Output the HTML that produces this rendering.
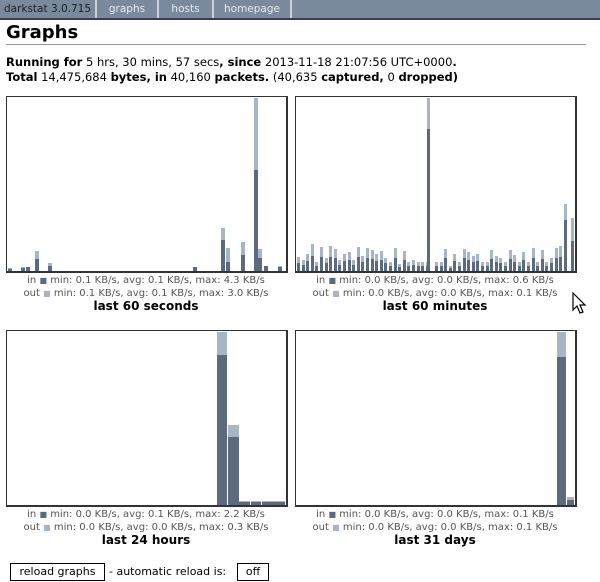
<!DOCTYPE html>
<html><head><meta charset="utf-8"><style>
*{margin:0;padding:0}
body{width:600px;height:582px;background:#fff;font-family:"DejaVu Sans","Liberation Sans",sans-serif;position:relative;overflow:hidden;color:#000}
.nav{position:absolute;left:0;top:0;width:600px;height:18px;background:#788a9c;border-bottom:2px solid #3a4048}
.tab{position:absolute;top:0;height:18px;font-size:10.5px;line-height:18px;text-align:center;color:#e6ecf2;border-right:2px solid #c8d0d8}
h1{position:absolute;left:6px;top:22px;font-size:18px;font-weight:bold;font-family:"DejaVu Sans",sans-serif}
.hr{position:absolute;left:6px;top:44px;width:580px;height:1px;background:#999}
.t{position:absolute;left:6px;font-size:11.5px;white-space:nowrap}
.box{position:absolute;border:1px solid #333;border-width:1px 2px 2px 1px;background:#fff;overflow:hidden}
.b{position:absolute}
.lg{position:absolute;font-size:10px;color:#555;white-space:nowrap;text-align:center;width:290px}
.lg i{font-style:normal;font-size:8px;color:#5b6b7d}
.lg i.o{color:#a7b6c7}
.ti{position:absolute;font-size:12px;font-weight:bold;text-align:center;width:290px}
.btn{position:absolute;top:563px;height:16px;border:1px solid #000;font-size:11px;line-height:16px;text-align:center}
</style></head><body>
<div class="nav">
<div class="tab" style="left:0;width:95px;color:#1a1f25">darkstat 3.0.715</div>
<div class="tab" style="left:97px;width:60px">graphs</div>
<div class="tab" style="left:159px;width:53px">hosts</div>
<div class="tab" style="left:214px;width:76px">homepage</div>
<div class="tab" style="left:292px;width:308px;border-right:none;border-left:0"></div>
</div>
<h1>Graphs</h1>
<div class="hr"></div>
<div class="t" style="top:55px"><b>Running for</b> 5 hrs, 30 mins, 57 secs<b>, since</b> 2013-11-18 21:07:56 UTC+0000<b>.</b></div>
<div class="t" style="top:70px"><b>Total</b> 14,475,684 <b>bytes, in</b> 40,160 <b>packets.</b> (40,635 <b>captured,</b> 0 <b>dropped)</b></div>

<div class="box" id="g1" style="left:6px;top:96px;width:279px;height:174px"></div>
<div class="box" id="g2" style="left:295px;top:96px;width:279px;height:174px"></div>
<div class="box" id="g3" style="left:6px;top:330px;width:279px;height:174px"></div>
<div class="box" id="g4" style="left:295px;top:330px;width:279px;height:174px"></div>

<div class="lg" style="left:1px;top:275px">in <i>■</i> min: 0.1 KB/s, avg: 0.1 KB/s, max: 4.3 KB/s</div>
<div class="lg" style="left:1px;top:288px">out <i class="o">■</i> min: 0.1 KB/s, avg: 0.1 KB/s, max: 3.0 KB/s</div>
<div class="ti" style="left:1px;top:299px">last 60 seconds</div>
<div class="lg" style="left:290px;top:275px">in <i>■</i> min: 0.0 KB/s, avg: 0.0 KB/s, max: 0.6 KB/s</div>
<div class="lg" style="left:290px;top:288px">out <i class="o">■</i> min: 0.0 KB/s, avg: 0.0 KB/s, max: 0.1 KB/s</div>
<div class="ti" style="left:290px;top:299px">last 60 minutes</div>
<div class="lg" style="left:1px;top:509px">in <i>■</i> min: 0.0 KB/s, avg: 0.1 KB/s, max: 2.2 KB/s</div>
<div class="lg" style="left:1px;top:522px">out <i class="o">■</i> min: 0.0 KB/s, avg: 0.0 KB/s, max: 0.3 KB/s</div>
<div class="ti" style="left:1px;top:533px">last 24 hours</div>
<div class="lg" style="left:290px;top:509px">in <i>■</i> min: 0.0 KB/s, avg: 0.0 KB/s, max: 0.1 KB/s</div>
<div class="lg" style="left:290px;top:522px">out <i class="o">■</i> min: 0.0 KB/s, avg: 0.0 KB/s, max: 0.1 KB/s</div>
<div class="ti" style="left:290px;top:533px">last 31 days</div>

<svg style="position:absolute;left:572px;top:292px" width="16" height="24" viewBox="0 0 16 24"><path d="M1 1 L1 18 L5 14 L8 21 L11 20 L8 13 L13 13 Z" fill="#fff" stroke="#000" stroke-width="1.2"/></svg>

<div class="btn" style="left:10px;width:93px">reload graphs</div>
<div class="t" style="left:109px;top:565px;font-size:11px">- automatic reload is:</div>
<div class="btn" style="left:237px;width:30px">off</div>

<script>
function bar(id,x,w,lt,dt){var g=document.getElementById(id);var r=g.getBoundingClientRect();var ox=r.left+1,oy=r.top+1,bot=oy+174;
 var a=document.createElement('div');a.className='b';a.style.cssText='left:'+(x-ox)+'px;width:'+w+'px;top:'+(lt-oy)+'px;height:'+(bot-lt)+'px;background:#a7b6c7';g.appendChild(a);
 var d=document.createElement('div');d.className='b';d.style.cssText='left:'+(x-ox)+'px;width:'+w+'px;top:'+(dt-oy)+'px;height:'+(bot-dt)+'px;background:#5b6b7d';g.appendChild(d);}
[[8,268,269],[21,267,268],[26,267,267],[35,251,259],[48,263,266],[193,267,267],[221,228,240],[226,248,262],[241,242,255],[254,98,170],[258,249,258],[264,266,266],[278,266,267]].forEach(function(v){bar('g1',v[0],4,v[1],v[2]);});
var hs=[257,260,254,244,262,247,258,246,249,260,254,252,260,247,256,248,250,254,251,258,262,248,264,251,262,260,262,262,262,98,262,262,249,266,254,262,249,252,256,254,262,262,250,256,258,262,250,255,262,252,262,248,262,250,262,258,248,246,204,218];
for(var i=0;i<hs.length;i++){var x=297+Math.round(i*4.6);var lt=hs[i];if(i==29){bar('g2',427,3,98,129);continue;}
 var dt=i==58?220:(i==59?241:Math.min(270,Math.round(lt+(270-lt)*0.45)));if(i==59)x=571;bar('g2',x,3,lt,dt);}
bar('g3',217,10,332,355);bar('g3',228,11,425,437);bar('g3',239,11,501,502);bar('g3',251,10,501,502);bar('g3',262,23,501,502);
bar('g4',557,9,332,357);bar('g4',567,7,497,500);
</script>
</body></html>
